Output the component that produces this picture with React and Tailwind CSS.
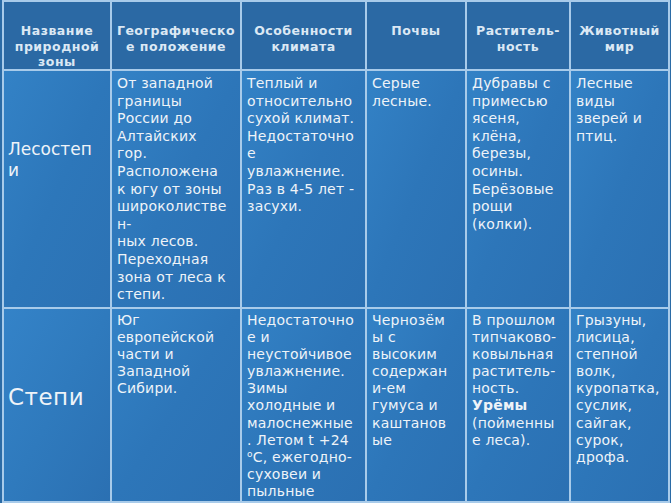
import React from "react";

const font = { fontFamily: '"DejaVu Sans", Verdana, sans-serif' };

const headers = [
  ["Название", "природной", "зоны"],
  ["Географическо", "е положение"],
  ["Особенности", "климата"],
  ["Почвы"],
  ["Раститель-", "ность"],
  ["Животный", "мир"],
];

const row1 = [
  ["От западной", "границы", "России до", "Алтайских", "гор.", "Расположена", "к югу от зоны", "широколистве", "н-", "ных лесов.", "Переходная", "зона от леса к", "степи."],
  ["Теплый и", "относительно", "сухой климат.", "Недостаточно", "е", "увлажнение.", "Раз в 4-5 лет -", "засухи."],
  ["Серые", "лесные."],
  ["Дубравы с", "примесью", "ясеня,", "клёна,", "березы,", "осины.", "Берёзовые", "рощи", "(колки)."],
  ["Лесные", "виды", "зверей и", "птиц."],
];

const row2 = [
  ["Юг", "европейской", "части и", "Западной", "Сибири."],
  ["Недостаточно", "е и", "неустойчивое", "увлажнение.", "Зимы", "холодные и", "малоснежные", ". Летом t +24", "DEG", "суховеи и", "пыльные"],
  ["Чернозём", "ы с", "высоким", "содержан", "и-ем", "гумуса и", "каштанов", "ые"],
  ["В прошлом", "типчаково-", "ковыльная", "раститель-", "ность.", "BOLD", "(пойменны", "е леса)."],
  ["Грызуны,", "лисица,", "степной", "волк,", "куропатка,", "суслик,", "сайгак,", "сурок,", "дрофа."],
];

function Line({ t }) {
  if (t === "DEG")
    return (
      <div className="whitespace-nowrap">
        <sup className="text-[9px]">o</sup>С, ежегодно-
      </div>
    );
  if (t === "BOLD") return <div className="whitespace-nowrap font-bold">Урёмы</div>;
  return <div className="whitespace-nowrap">{t}</div>;
}

function BodyCell({ lines, tight }) {
  return (
    <div
      className={
        tight
          ? "overflow-hidden bg-gradient-to-br from-[#3382c6] via-[#2d76b9] to-[#2b70b2] pl-[5px] pt-[3px] text-[14px] leading-[17.1px] tracking-[0.2px] text-[#eef3f8]"
          : "overflow-hidden bg-gradient-to-br from-[#3382c6] via-[#2d76b9] to-[#2b70b2] pl-[5px] pt-[4px] text-[14px] leading-[17.6px] tracking-[0.2px] text-[#eef3f8]"
      }
    >
      {lines.map((t, i) => (
        <Line key={i} t={t} />
      ))}
    </div>
  );
}

export default function App() {
  return (
    <div className="h-[503px] w-[671px] overflow-hidden bg-[#2b6ba6]" style={font}>
      <div className="ml-[2px] grid h-[503px] w-[668px] grid-cols-[106px_128px_123px_98px_102px_97px] grid-rows-[67px_236px_192px] gap-[2px] bg-[#a8cbea] p-[2px]">
        {headers.map((h, i) => (
          <div
            key={i}
            className="bg-[#2b69a4] pt-[21px] text-center text-[12.5px] font-bold leading-[15.5px] tracking-[0.5px] text-[#dbe8f4]"
          >
            {h.map((t, j) => (
              <div key={j} className="whitespace-nowrap">
                {t}
              </div>
            ))}
          </div>
        ))}

        <div className="bg-gradient-to-br from-[#3382c6] via-[#2d77ba] to-[#2c72b4] pl-[4px] pt-[68px] text-[17px] leading-[21px] text-[#eef3f8]">
          <div>Лесостеп</div>
          <div>и</div>
        </div>
        {row1.map((l, i) => (
          <BodyCell key={i} lines={l} />
        ))}

        <div className="bg-gradient-to-br from-[#3483c8] via-[#2f7abd] to-[#2b70b2] pl-[4px] pt-[74px] text-[23px] leading-[28px] tracking-[0.5px] text-[#eef3f8]">
          Степи
        </div>
        {row2.map((l, i) => (
          <BodyCell key={i} lines={l} tight />
        ))}
      </div>
    </div>
  );
}
